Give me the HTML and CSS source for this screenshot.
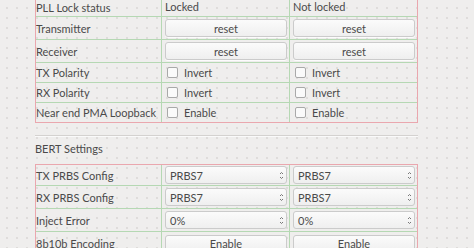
FILE: index.html
```html
<!DOCTYPE html>
<html lang="en">
<head>
    <meta charset="UTF-8">
    <title>Transceiver Settings</title>
    <link rel="stylesheet" href="styles.css">
</head>
<body>
    <div class="page">
        <div class="form top-form">
            <div class="cell label row-first">PLL Lock status</div>
            <div class="cell value row-first">Locked</div>
            <div class="cell value row-first">Not locked</div>

            <div class="cell label row-btn">Transmitter</div>
            <div class="cell value row-btn"><button class="btn">reset</button></div>
            <div class="cell value row-btn"><button class="btn">reset</button></div>

            <div class="cell label row-btn">Receiver</div>
            <div class="cell value row-btn"><button class="btn">reset</button></div>
            <div class="cell value row-btn"><button class="btn">reset</button></div>

            <div class="cell label row-check">TX Polarity</div>
            <div class="cell value row-check"><label class="check"><span class="box"></span>Invert</label></div>
            <div class="cell value row-check"><label class="check"><span class="box"></span>Invert</label></div>

            <div class="cell label row-check">RX Polarity</div>
            <div class="cell value row-check"><label class="check"><span class="box"></span>Invert</label></div>
            <div class="cell value row-check"><label class="check"><span class="box"></span>Invert</label></div>

            <div class="cell label row-check last">Near end PMA Loopback</div>
            <div class="cell value row-check last"><label class="check"><span class="box"></span>Enable</label></div>
            <div class="cell value row-check last"><label class="check"><span class="box"></span>Enable</label></div>
        </div>

        <div class="separator"></div>

        <div class="section-title">BERT Settings</div>

        <div class="form bert-form">
            <div class="cell label row-short">TX PRBS Config</div>
            <div class="cell value row-short"><div class="combo"><span>PRBS7</span><svg class="arrows" width="5" height="9" viewBox="0 0 5 9"><path d="M1 3 L2.5 1.5 L4 3 M1 6 L2.5 7.5 L4 6" fill="none" stroke="#777" stroke-width="1"/></svg></div></div>
            <div class="cell value row-short"><div class="combo"><span>PRBS7</span><svg class="arrows" width="5" height="9" viewBox="0 0 5 9"><path d="M1 3 L2.5 1.5 L4 3 M1 6 L2.5 7.5 L4 6" fill="none" stroke="#777" stroke-width="1"/></svg></div></div>

            <div class="cell label row-btn">RX PRBS Config</div>
            <div class="cell value row-btn"><div class="combo"><span>PRBS7</span><svg class="arrows" width="5" height="9" viewBox="0 0 5 9"><path d="M1 3 L2.5 1.5 L4 3 M1 6 L2.5 7.5 L4 6" fill="none" stroke="#777" stroke-width="1"/></svg></div></div>
            <div class="cell value row-btn"><div class="combo"><span>PRBS7</span><svg class="arrows" width="5" height="9" viewBox="0 0 5 9"><path d="M1 3 L2.5 1.5 L4 3 M1 6 L2.5 7.5 L4 6" fill="none" stroke="#777" stroke-width="1"/></svg></div></div>

            <div class="cell label row-btn">Inject Error</div>
            <div class="cell value row-btn"><div class="combo"><span>0%</span><svg class="arrows" width="5" height="9" viewBox="0 0 5 9"><path d="M1 3 L2.5 1.5 L4 3 M1 6 L2.5 7.5 L4 6" fill="none" stroke="#777" stroke-width="1"/></svg></div></div>
            <div class="cell value row-btn"><div class="combo"><span>0%</span><svg class="arrows" width="5" height="9" viewBox="0 0 5 9"><path d="M1 3 L2.5 1.5 L4 3 M1 6 L2.5 7.5 L4 6" fill="none" stroke="#777" stroke-width="1"/></svg></div></div>

            <div class="cell label row-btn">8b10b Encoding</div>
            <div class="cell value row-btn"><button class="btn">Enable</button></div>
            <div class="cell value row-btn"><button class="btn">Enable</button></div>
        </div>
    </div>
</body>
</html>
```

FILE: styles.css
```css
body {
    margin: 0;
    height: 248px;
    overflow: hidden;
    background-color: #efeeed;
    background-image: radial-gradient(circle, #d9d7d5 0.6px, transparent 1px);
    background-size: 10px 10px;
    background-position: 2px 3px;
    font-family: Lato, "Noto Sans", sans-serif;
    font-size: 11px;
    color: #4a4a4a;
}

.page {
    padding-left: 35px;
    width: 383px;
}

.form {
    display: grid;
    grid-template-columns: 125px 128px 128px;
    border-left: 1px solid #eaa7ae;
    border-right: 1px solid #eaa7ae;
    border-bottom: 1px solid #eaa7ae;
}

.top-form {
    margin-top: -3px;
}

.bert-form {
    border-top: 1px solid #eaa7ae;
}

.cell {
    display: flex;
    align-items: center;
    border-bottom: 1px solid #b5d8b3;
    box-sizing: border-box;
    white-space: nowrap;
}

.cell.value {
    border-left: 1px solid #b5d8b3;
    padding: 0 2px 0 3px;
}

.cell.last,
.bert-form .cell:nth-last-child(-n+3) {
    border-bottom: none;
}

.row-first {
    height: 20px;
    padding-top: 1px;
}

.row-btn {
    height: 23px;
}

.row-short {
    height: 21px;
}

.row-check {
    height: 20px;
}

.row-check.last {
    height: 19px;
}

.btn {
    width: 100%;
    height: 18px;
    padding: 0;
    font-family: inherit;
    font-size: 11px;
    color: #4a4a4a;
    background: linear-gradient(#fbfbfb, #efefef);
    border: 1px solid #cbcbcb;
    border-radius: 3px;
    box-shadow: 0 1px 0 rgba(255, 255, 255, 0.8);
}

.check {
    display: flex;
    align-items: center;
    gap: 6px;
    padding-left: 2px;
}

.box {
    width: 9px;
    height: 9px;
    border: 1px solid #a9a9a9;
    border-radius: 2px;
    background: #fafafa;
}

.combo {
    display: flex;
    align-items: center;
    justify-content: space-between;
    width: 100%;
    height: 18px;
    box-sizing: border-box;
    padding: 0 2px 0 4px;
    background: linear-gradient(#fbfbfb, #efefef);
    border: 1px solid #cbcbcb;
    border-radius: 3px;
}

.separator {
    margin-top: 12px;
    height: 1px;
    background: #d4d2d0;
    border-bottom: 1px solid #fafafa;
}

.section-title {
    height: 27px;
    line-height: 24px;
    box-sizing: border-box;
}
```
